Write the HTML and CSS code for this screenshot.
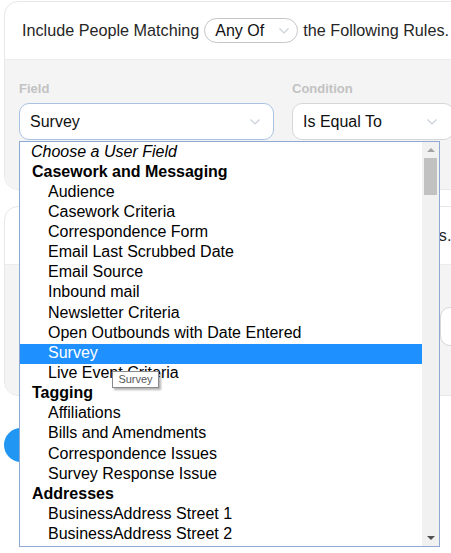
FILE: index.html
```html
<!DOCTYPE html>
<html lang="en">
<head>
<meta charset="utf-8">
<title>Rules</title>
<link rel="stylesheet" href="styles.css">
</head>
<body>
<div class="stage">
  <div class="cards">
    <section class="card card-first">
      <header class="card-head">
        <span class="head-text">Include People Matching</span>
        <span class="pill">Any Of
          <svg class="chev" width="10" height="6" viewBox="0 0 10 6"><polyline points="0.5,0.5 5,5 9.5,0.5"/></svg>
        </span>
        <span class="head-text">the Following Rules.</span>
      </header>
      <div class="card-body">
        <div class="rule-row">
          <div class="col col-field">
            <div class="label">Field</div>
            <div class="select select-focus">Survey
              <svg class="chev" width="10" height="6" viewBox="0 0 10 6"><polyline points="0.5,0.5 5,5 9.5,0.5"/></svg>
            </div>
          </div>
          <div class="col col-cond">
            <div class="label">Condition</div>
            <div class="select">Is Equal To
              <svg class="chev" width="10" height="6" viewBox="0 0 10 6"><polyline points="0.5,0.5 5,5 9.5,0.5"/></svg>
            </div>
          </div>
        </div>
      </div>
    </section>

    <section class="card card-second">
      <header class="card-head">
        <span class="head-text">Exclude People Matching</span>
        <span class="pill">All Of
          <svg class="chev" width="10" height="6" viewBox="0 0 10 6"><polyline points="0.5,0.5 5,5 9.5,0.5"/></svg>
        </span>
        <span class="head-text">the Following Rules.</span>
      </header>
      <div class="card-body body-second">
        <div class="select select-value"></div>
      </div>
    </section>

    <div class="add-btn"></div>
  </div>

  <div class="listbox">
    <div class="list">
      <div class="opt placeholder">Choose a User Field</div>
      <div class="opt group">Casework and Messaging</div>
      <div class="opt">Audience</div>
      <div class="opt">Casework Criteria</div>
      <div class="opt">Correspondence Form</div>
      <div class="opt">Email Last Scrubbed Date</div>
      <div class="opt">Email Source</div>
      <div class="opt">Inbound mail</div>
      <div class="opt">Newsletter Criteria</div>
      <div class="opt">Open Outbounds with Date Entered</div>
      <div class="opt selected">Survey</div>
      <div class="opt">Live Event Criteria</div>
      <div class="opt group">Tagging</div>
      <div class="opt">Affiliations</div>
      <div class="opt">Bills and Amendments</div>
      <div class="opt">Correspondence Issues</div>
      <div class="opt">Survey Response Issue</div>
      <div class="opt group">Addresses</div>
      <div class="opt">BusinessAddress Street 1</div>
      <div class="opt">BusinessAddress Street 2</div>
    </div>
    <div class="scrollbar">
      <span class="arrow arrow-up"></span>
      <span class="thumb"></span>
      <span class="track-fill"></span>
      <span class="arrow arrow-down"></span>
    </div>
  </div>

  <div class="tooltip">Survey</div>
</div>
</body>
</html>
```

FILE: styles.css
```css
html, body {
  margin: 0;
  padding: 0;
  background: #ffffff;
  overflow: hidden;
}

body {
  font-family: "Liberation Sans", Arial, sans-serif;
  color: #222;
}

.stage {
  position: relative;
  width: 451px;
  height: 553px;
  overflow: hidden;
}

.cards {
  padding: 1px 0 0 4px;
  display: flex;
  flex-direction: column;
  align-items: flex-start;
}

.card {
  width: 480px;
  border: 1px solid #e8e8e8;
  border-radius: 14px;
  background: #ffffff;
  overflow: hidden;
  flex-shrink: 0;
}

.card-second {
  margin-top: 16px;
}

.card-head {
  height: 57px;
  border-bottom: 1px solid #ececec;
  display: flex;
  align-items: center;
  gap: 5px;
  padding-left: 17px;
  font-size: 16.2px;
  color: #262626;
  white-space: nowrap;
}

.card-second .card-head {
  padding-left: 14px;
}

.pill {
  box-sizing: border-box;
  width: 94px;
  height: 25px;
  border: 1px solid #c6c6c6;
  border-radius: 13px;
  display: flex;
  align-items: center;
  padding-left: 10px;
  font-size: 16px;
  color: #111;
  position: relative;
}

.pill .chev {
  margin-left: auto;
  margin-right: 8px;
}

.chev polyline {
  fill: none;
  stroke: #c9d0d8;
  stroke-width: 1.2;
}

.card-body {
  background: #f4f4f4;
  height: 129px;
  box-sizing: border-box;
  padding: 21px 0 0 14px;
}

.rule-row {
  display: flex;
  gap: 18px;
}

.col-field { width: 255px; }
.col-cond { width: 162px; }

.label {
  font-size: 13px;
  font-weight: bold;
  line-height: 16px;
  color: #c2c2c2;
  margin-bottom: 6px;
}

.select {
  box-sizing: border-box;
  height: 37px;
  border: 1px solid #d6d6d6;
  border-radius: 10px;
  background: #ffffff;
  display: flex;
  align-items: center;
  padding-left: 10px;
  font-size: 16px;
  color: #111;
}

.select .chev {
  margin-left: auto;
  margin-right: 13px;
}

.col-cond .select .chev {
  margin-right: 16px;
}

.select-focus {
  border-color: #a9c2e2;
}

.body-second {
  height: 130px;
  padding: 42px 0 0 435px;
}

.select-value {
  width: 120px;
  height: 39px;
}

.add-btn {
  width: 34px;
  height: 34px;
  border-radius: 50%;
  background: #2196f3;
  margin-top: 32px;
}

/* Open list box overlay */
.listbox {
  position: absolute;
  left: 19px;
  top: 141px;
  width: 421px;
  height: 406px;
  box-sizing: border-box;
  border: 1px solid #8fa8d4;
  background: #ffffff;
  display: flex;
  overflow: hidden;
}

.list {
  width: 402px;
  padding-top: 0.5px;
  font-size: 16px;
  color: #000;
}

.opt {
  height: 20.15px;
  line-height: 18px;
  padding-left: 28px;
  white-space: nowrap;
}

.opt.placeholder {
  font-style: italic;
  padding-left: 11px;
}

.opt.group {
  font-weight: bold;
  padding-left: 12px;
}

.opt.selected {
  background: #1e90ff;
  color: #ffffff;
}

.scrollbar {
  width: 17px;
  background: #f1f1f1;
  display: flex;
  flex-direction: column;
  align-items: center;
}

.arrow {
  width: 0;
  height: 0;
  border-left: 4px solid transparent;
  border-right: 4px solid transparent;
}

.arrow-up {
  margin-top: 6px;
  border-bottom: 4px solid #a3a3a3;
}

.arrow-down {
  margin-bottom: 6px;
  border-top: 4px solid #505050;
}

.thumb {
  width: 13px;
  height: 37px;
  margin-top: 6px;
  background: #c1c1c1;
}

.track-fill {
  flex: 1;
}

.tooltip {
  position: absolute;
  left: 112px;
  top: 371px;
  width: 47px;
  height: 17px;
  box-sizing: border-box;
  border: 1px solid #8a8a8a;
  background: #ffffff;
  box-shadow: 2px 2px 2px rgba(0, 0, 0, 0.3);
  font-size: 11px;
  line-height: 15px;
  color: #575757;
  text-align: center;
}
```
